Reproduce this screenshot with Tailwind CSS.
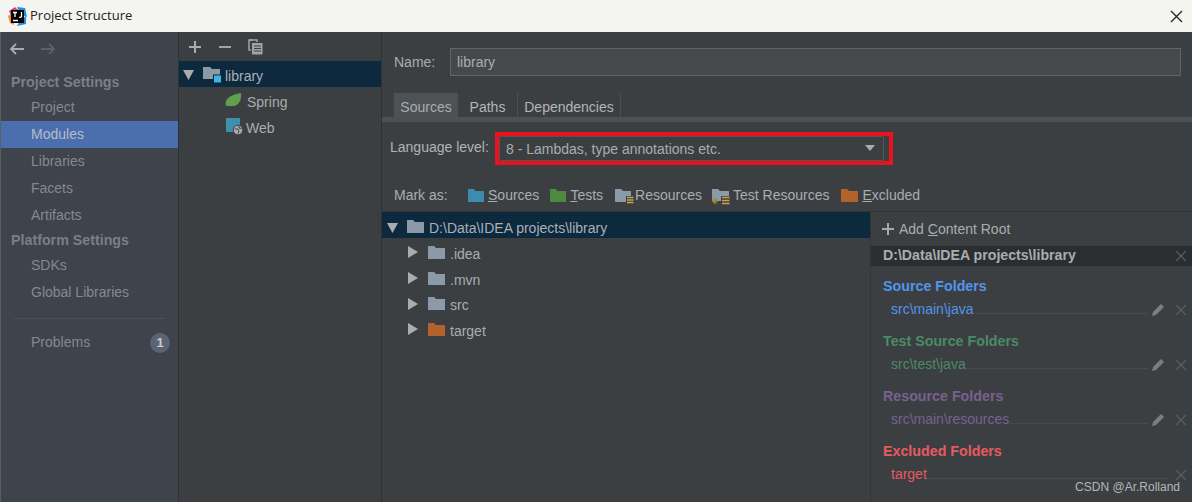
<!DOCTYPE html>
<html lang="en">
<head>
<meta charset="UTF-8">
<title>Project Structure</title>
<script src="https://cdn.jsdelivr.net/npm/@tailwindcss/browser@4"></script>
</head>
<body class="w-[1192px] h-[502px] overflow-hidden relative font-['Liberation_Sans',sans-serif] text-[14px] bg-[#3c3f41] text-[#a9adb0]">

  <!-- title bar -->
  <div class="h-[32px] bg-[#f4f4f1] flex items-center pl-[8px] pr-[9px]">
    <svg class="w-[19px] h-[19px]" viewBox="0 0 19 19">
      <path d="M1 4 7 0 10 3 4 11Z" fill="#e8387a"/><path d="M9 0 17 1 19 10 13 8Z" fill="#1f8fe6"/><path d="M0 9 4 6 6 18 2 16Z" fill="#f58a2c"/><path d="M12 14 18 9 18 17 9 19Z" fill="#1f8fe6"/>
      <rect x="3" y="3" width="13" height="13" fill="#000"/>
      <path d="M5 5.5H9M7 5.500V10M5 13.500H10" stroke="#fff" stroke-width="1.300" fill="none"/><path d="M13.500 5V9.500Q13.500 10.500 11 10.300" stroke="#fff" stroke-width="1.300" fill="none"/>
    </svg>
    <span class="ml-[3px] font-['Open_Sans',sans-serif] text-[13px] text-[#222]">Project Structure</span>
    <svg class="ml-auto w-[13px] h-[13px]" viewBox="0 0 13 13"><path d="M1 1 12 12M12 1 1 12" stroke="#222" stroke-width="1.300"/></svg>
  </div>

  <div class="flex h-[470px]">
    <!-- left nav -->
    <aside class="w-[179px] shrink-0 bg-[#3e434c] border-l border-l-[#5a5e64] border-r border-r-[#2f3133] flex flex-col text-[#87898c]">
      <div class="h-[34px] flex items-center gap-[15px] pl-[8px]">
        <svg class="w-[16px] h-[14px]" viewBox="0 0 16 14"><path d="M15 7H2M7 2 2 7 7 12" stroke="#a9abad" stroke-width="1.800" fill="none"/></svg>
        <svg class="w-[16px] h-[14px]" viewBox="0 0 16 14"><path d="M1 7H14M9 2 14 7 9 12" stroke="#5d6065" stroke-width="1.800" fill="none"/></svg>
      </div>
      <div class="mt-[4px] h-[25px] pt-[1px] flex items-center pl-[10px] font-bold text-[14.25px] text-[#7c7f83]">Project Settings</div>
      <div class="h-[26px] pb-[2px] flex items-center pl-[30px]">Project</div>
      <div class="h-[27px] flex items-center pl-[30px] bg-[#4b6eaf] text-[#b5bcc6]">Modules</div>
      <div class="h-[27px] flex items-center pl-[30px]">Libraries</div>
      <div class="h-[27px] flex items-center pl-[30px]">Facets</div>
      <div class="h-[27px] flex items-center pl-[30px]">Artifacts</div>
      <div class="h-[23px] flex items-center pl-[10px] font-bold text-[14.25px] text-[#7c7f83]">Platform Settings</div>
      <div class="h-[27px] flex items-center pl-[30px]">SDKs</div>
      <div class="h-[26px] flex items-center pl-[30px]">Global Libraries</div>
      <div class="mt-[13px] mb-[10px] mx-[13px] h-px bg-[#4e4f50]"></div>
      <div class="h-[27px] flex items-center pl-[30px] pr-[8px] justify-between">
        Problems
        <span class="w-[20px] h-[20px] rounded-full bg-[#5c6372] text-[#c9ccd1] font-bold text-[13px] flex items-center justify-center">1</span>
      </div>
    </aside>

    <!-- module tree -->
    <section class="w-[203px] shrink-0 bg-[#3c3f41] border-r border-r-[#2f3133]">
      <div class="h-[29px] flex items-center pl-[9px] gap-[17px]">
        <svg class="w-[14px] h-[14px]" viewBox="0 0 14 14"><path d="M7 1V13M1 7H13" stroke="#a9abad" stroke-width="2"/></svg>
        <svg class="w-[12px] h-[14px]" viewBox="0 0 12 14"><path d="M0 7H12" stroke="#a0a2a4" stroke-width="2"/></svg>
        <svg class="w-[15px] h-[16px]" viewBox="0 0 15 16"><path d="M4.500 1H1V11H3" stroke="#a0a2a4" stroke-width="1.500" fill="none"/><path d="M1 1H9V3" stroke="#a0a2a4" stroke-width="1.500" fill="none"/><rect x="4" y="4" width="10.500" height="11.500" fill="#a0a2a4"/><path d="M6 7H13M6 9.500H13M6 12H13" stroke="#3c3f41" stroke-width="1"/></svg>
      </div>
      <div class="h-[26px] bg-[#0d293e] flex items-center pl-[4px] text-[#a9b0b6]">
        <svg class="w-[11px] h-[10px] mt-[2px]" viewBox="0 0 11 10"><path d="M0 0H11L5.500 10Z" fill="#a9adb0"/></svg>
        <svg class="ml-[9px] mt-[1px] w-[19px] h-[18px]" viewBox="0 0 19 18"><path d="M0 1H7L9 3H17V13H0Z" fill="#8a9aa8"/><rect x="10.500" y="9" width="8" height="8" fill="#3fb3e6" stroke="#0d293e"/></svg>
        <span class="ml-[3px] mt-[4px]">library</span>
      </div>
      <div class="h-[26px] flex items-center pl-[46px]">
        <svg class="w-[17px] h-[14px]" viewBox="0 0 17 14"><path d="M1 13C-1 6 5 2 16 0 17 8 13 13 7 13 4.500 13.500 2.500 12.500 1 13Z" fill="#5fa04e"/></svg>
        <span class="ml-[5px] mt-[4px]">Spring</span>
      </div>
      <div class="h-[26px] flex items-center pl-[47px]">
        <svg class="w-[17px] h-[17px]" viewBox="0 0 17 17"><rect x="0" y="0" width="14" height="14" fill="#3f8fae"/><circle cx="12" cy="12" r="4.800" fill="#a9adb0" stroke="#3c3f41"/><path d="M8.500 11H12L13 13 12 15.500M13 8V10L15.500 10.500" stroke="#3c3f41" stroke-width="1" fill="none"/></svg>
        <span class="ml-[3px] mt-[4px]">Web</span>
      </div>
    </section>

    <!-- module settings -->
    <main class="flex-1 min-w-0 flex flex-col">
      <div class="h-[61px] flex items-center pl-[12px] pr-[11px] pb-[1px]">
        <span class="w-[56px] shrink-0">Name:</span>
        <div class="flex-1 h-[28px] bg-[#45494a] border border-[#646464] flex items-center pl-[6px]">library</div>
      </div>
      <div class="h-[24px] flex pl-[12px] border-b-[5px] border-b-[#4d5154] box-content">
        <div class="w-[64px] pt-[5px] bg-[#4e5254] flex items-center justify-center text-[#a9adb0]">Sources</div>
        <div class="w-[60px] pt-[5px] border-r border-r-[#4d5052] flex items-center justify-center text-[#b3b5b7]">Paths</div>
        <div class="w-[103px] pt-[5px] border-r border-r-[#4d5052] flex items-center justify-center text-[#b3b5b7]">Dependencies</div>
      </div>
      <div class="h-[54px] flex items-start pl-[8px] pt-[14px]">
        <span class="w-[109px] h-[22px] flex items-center shrink-0 text-[#b0b3b5]">Language level:</span>
        <div class="relative w-[385px] h-[25px] pt-[2px] bg-[#3c3f41] border border-[#555] rounded-[2px] flex items-center pl-[6px]">
          8 - Lambdas, type annotations etc.
          <svg class="absolute right-[8px] top-[8px] w-[10px] h-[6px]" viewBox="0 0 10 6"><path d="M0 0H10L5 6Z" fill="#a9adb0"/></svg>
          <div class="absolute -left-[5px] -top-[5px] w-[398px] h-[33px] border-[4px] border-[#e8131f]"></div>
        </div>
      </div>
      <div class="h-[36px] flex items-center pl-[12px] pt-[4px] border-b border-b-[#323436]">
        <span class="w-[74px] shrink-0">Mark as:</span>
        <svg class="w-[16px] h-[13px]" viewBox="0 0 17 13" preserveAspectRatio="none"><path d="M0 0H6L8 2H17V13H0Z" fill="#3d8cb0"/></svg>
        <span class="ml-[4px]"><u>S</u>ources</span>
        <svg class="ml-[11px] w-[16px] h-[13px]" viewBox="0 0 17 13" preserveAspectRatio="none"><path d="M0 0H6L8 2H17V13H0Z" fill="#4e8a3e"/></svg>
        <span class="ml-[4px]"><u>T</u>ests</span>
        <svg class="ml-[12px] w-[19px] h-[16px] mt-[3px]" viewBox="0 0 19 16"><path d="M0 0H6L8 2H16V13H0Z" fill="#8a9aa8"/><rect x="11" y="7" width="8" height="9" fill="#3c3f41"/><path d="M12 8.500H18.500M12 11H18.500M12 13.500H18.500" stroke="#c9a24b" stroke-width="1.500"/></svg>
        <span class="ml-[1px]">Resources</span>
        <svg class="ml-[10px] w-[18px] h-[17px] mt-[3px]" viewBox="0 0 18 17"><path d="M0 0H6L8 2H17V12H0Z" fill="#8a9aa8"/><path d="M0 12 3 8.500V15.500Z" fill="#d9722c"/><path d="M6 12 3.500 8.500V15.500Z" fill="#5aa03c"/><rect x="9" y="7" width="9" height="10" fill="#3c3f41"/><path d="M10 8.500H17.500M10 11.500H17.500M10 14.500H17.500" stroke="#c9a24b" stroke-width="1.500"/></svg>
        <span class="ml-[3px]">Test Resources</span>
        <svg class="ml-[12px] w-[17px] h-[13px]" viewBox="0 0 17 13"><path d="M0 0H6L8 2H17V13H0Z" fill="#b4622c"/></svg>
        <span class="ml-[4px]"><u>E</u>xcluded</span>
      </div>

      <div class="flex-1 flex min-h-0">
        <!-- content tree -->
        <div class="w-[489px] shrink-0 border-r border-r-[#323436]">
          <div class="h-[26px] bg-[#0d293e] flex items-center pl-[5px] text-[#a9b0b6]">
            <svg class="w-[11px] h-[10px] mt-[6px]" viewBox="0 0 11 10"><path d="M0 0H11L5.500 10Z" fill="#a9adb0"/></svg>
            <svg class="ml-[9px] w-[17px] h-[13px] mt-[2px]" viewBox="0 0 17 13"><path d="M0 0H6L8 2H17V13H0Z" fill="#8a9aa8"/></svg>
            <span class="ml-[5px] mt-[6px]">D:\Data\IDEA projects\library</span>
          </div>
          <div class="h-[26px] flex items-center pl-[26px]">
            <svg class="w-[10px] h-[12px] mt-[2px]" viewBox="0 0 10 12"><path d="M0 0 10 6 0 12Z" fill="#a9adb0"/></svg>
            <svg class="ml-[10px] w-[17px] h-[13px] mt-[2px]" viewBox="0 0 17 13"><path d="M0 0H6L8 2H17V13H0Z" fill="#8a9aa8"/></svg>
            <span class="ml-[5px] mt-[6px]">.idea</span>
          </div>
          <div class="h-[26px] flex items-center pl-[26px]">
            <svg class="w-[10px] h-[12px] mt-[2px]" viewBox="0 0 10 12"><path d="M0 0 10 6 0 12Z" fill="#a9adb0"/></svg>
            <svg class="ml-[10px] w-[17px] h-[13px] mt-[2px]" viewBox="0 0 17 13"><path d="M0 0H6L8 2H17V13H0Z" fill="#8a9aa8"/></svg>
            <span class="ml-[5px] mt-[6px]">.mvn</span>
          </div>
          <div class="h-[25px] flex items-center pl-[26px]">
            <svg class="w-[10px] h-[12px] mt-[2px]" viewBox="0 0 10 12"><path d="M0 0 10 6 0 12Z" fill="#a9adb0"/></svg>
            <svg class="ml-[10px] w-[17px] h-[13px] mt-[2px]" viewBox="0 0 17 13"><path d="M0 0H6L8 2H17V13H0Z" fill="#8a9aa8"/></svg>
            <span class="ml-[5px] mt-[6px]">src</span>
          </div>
          <div class="h-[26px] flex items-center pl-[26px]">
            <svg class="w-[10px] h-[12px] mt-[2px]" viewBox="0 0 10 12"><path d="M0 0 10 6 0 12Z" fill="#a9adb0"/></svg>
            <svg class="ml-[10px] w-[17px] h-[13px] mt-[2px]" viewBox="0 0 17 13"><path d="M0 0H6L8 2H17V13H0Z" fill="#b4622c"/></svg>
            <span class="ml-[5px] mt-[6px]">target</span>
          </div>
        </div>

        <!-- content roots -->
        <div class="flex-1 min-w-0 flex flex-col">
          <div class="h-[34px] flex items-center pl-[11px] shrink-0">
            <svg class="w-[12px] h-[12px]" viewBox="0 0 12 12"><path d="M6 0V12M0 6H12" stroke="#a9abad" stroke-width="2"/></svg>
            <span class="ml-[5px]">Add <u>C</u>ontent Root</span>
          </div>
          <div class="h-[20px] bg-[#2b2e30] flex items-center pl-[12px] pr-[6px] font-bold text-[14.15px] text-[#a9adb0] shrink-0">
            D:\Data\IDEA projects\library
            <svg class="ml-auto w-[10px] h-[10px]" viewBox="0 0 9 9"><path d="M0 0 9 9M9 0 0 9" stroke="#5f6264" stroke-width="1.100"/></svg>
          </div>
          <div class="pl-[12px] pt-[9px] font-bold text-[14.25px] text-[#5394ec] h-[32px] flex items-center">Source Folders</div>
          <div class="h-[23px] flex items-center pl-[20px] pr-[6px] text-[#5394ec]">
            <span>src\main\java</span>
            <span class="flex-1 ml-[1px] mt-[7px] border-b border-dotted border-b-[#555]"></span>
            <svg class="ml-[5px] w-[13px] h-[13px]" viewBox="0 0 13 13"><path d="M0 13 1 9 9 1 12 4 4 12Z" fill="#7b7e80"/></svg>
            <svg class="ml-[11px] w-[10px] h-[10px]" viewBox="0 0 9 9"><path d="M0 0 9 9M9 0 0 9" stroke="#5f6264" stroke-width="1.100"/></svg>
          </div>
          <div class="pl-[12px] pt-[9px] font-bold text-[14.25px] text-[#4a8a66] h-[32px] flex items-center">Test Source Folders</div>
          <div class="h-[23px] flex items-center pl-[20px] pr-[6px] text-[#4a8a66]">
            <span>src\test\java</span>
            <span class="flex-1 ml-[1px] mt-[7px] border-b border-dotted border-b-[#555]"></span>
            <svg class="ml-[5px] w-[13px] h-[13px]" viewBox="0 0 13 13"><path d="M0 13 1 9 9 1 12 4 4 12Z" fill="#7b7e80"/></svg>
            <svg class="ml-[11px] w-[10px] h-[10px]" viewBox="0 0 9 9"><path d="M0 0 9 9M9 0 0 9" stroke="#5f6264" stroke-width="1.100"/></svg>
          </div>
          <div class="pl-[12px] pt-[9px] font-bold text-[14.25px] text-[#7a5f91] h-[32px] flex items-center">Resource Folders</div>
          <div class="h-[23px] flex items-center pl-[20px] pr-[6px] text-[#7a5f91]">
            <span>src\main\resources</span>
            <span class="flex-1 ml-[1px] mt-[7px] border-b border-dotted border-b-[#555]"></span>
            <svg class="ml-[5px] w-[13px] h-[13px]" viewBox="0 0 13 13"><path d="M0 13 1 9 9 1 12 4 4 12Z" fill="#7b7e80"/></svg>
            <svg class="ml-[11px] w-[10px] h-[10px]" viewBox="0 0 9 9"><path d="M0 0 9 9M9 0 0 9" stroke="#5f6264" stroke-width="1.100"/></svg>
          </div>
          <div class="pl-[12px] pt-[9px] font-bold text-[14.25px] text-[#e85a5f] h-[32px] flex items-center">Excluded Folders</div>
          <div class="h-[23px] flex items-center pl-[20px] pr-[6px] text-[#e85a5f]">
            <span>target</span>
            <span class="flex-1 ml-[1px] mt-[7px] border-b border-dotted border-b-[#555]"></span>
            <svg class="ml-[6px] w-[10px] h-[10px]" viewBox="0 0 9 9"><path d="M0 0 9 9M9 0 0 9" stroke="#5f6264" stroke-width="1.100"/></svg>
          </div>
        </div>
      </div>
    </main>
  </div>

  <!-- watermark -->
  <div class="absolute right-[12px] bottom-[6px] text-[12px] text-[#b4b6b8]">CSDN @Ar.Rolland</div>
</body>
</html>
